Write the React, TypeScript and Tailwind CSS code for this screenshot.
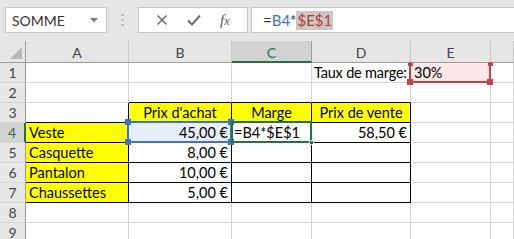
import React from 'react';

const font = { fontFamily: 'Lato, "Liberation Sans", Arial, sans-serif' };

type Cell = {
  text?: React.ReactNode;
  cls: string;
};

// column widths: row header, A, B, C, D, E, F
const cols = 'grid-cols-[26px_103px_103px_80px_99px_80px_1fr]';

const g = 'border-r border-b border-r-[#d4d4d4] border-b-[#d4d4d4]';

const RowHead: React.FC<{ n: number; active?: boolean }> = ({ n, active }) => (
  <div
    className={`h-[20px] flex items-center justify-center text-[14px] border-b border-b-[#d4d4d4] ${
      active
        ? 'bg-[#d2d2d2] text-[#217346] border-r-2 border-r-[#217346]'
        : 'bg-[#e6e6e6] text-[#444] border-r border-r-[#9b9b9b]'
    }`}
  >
    {n}
  </div>
);

const rows: Cell[][] = [
  // row 1
  [
    { cls: g },
    { cls: g },
    { cls: g },
    { text: 'Taux de marge:', cls: `${g} pl-[2px] justify-start tracking-[-0.2px]` },
    { text: '30%', cls: `${g} bg-[#fbe8e9] pl-[3px] justify-start` },
    { cls: g },
  ],
  // row 2
  [
    { cls: g },
    { cls: 'border-r border-r-[#d4d4d4] border-b border-b-black' },
    { cls: 'border-r border-r-[#d4d4d4] border-b border-b-black' },
    { cls: 'border-r border-r-[#d4d4d4] border-b border-b-black' },
    { cls: g },
    { cls: g },
  ],
  // row 3
  [
    { cls: 'border-r border-r-black border-b border-b-black' },
    { text: "Prix d'achat", cls: 'border-r border-b border-black bg-[#ffff00] justify-center' },
    { text: 'Marge', cls: 'border-r border-b border-black bg-[#ffff00] justify-center' },
    { text: 'Prix de vente', cls: 'border-r border-b border-black bg-[#ffff00] justify-center' },
    { cls: g },
    { cls: g },
  ],
  // row 4
  [
    { text: 'Veste', cls: 'border-r border-b border-black bg-[#ffff00] pl-[3px]' },
    { text: '45,00 €', cls: 'border-r border-b border-black bg-[#e8eef8] justify-end pr-[3px]' },
    { text: '=B4*$E$1', cls: 'border-r border-b border-black pl-[2px]' },
    { text: '58,50 €', cls: 'border-r border-b border-black justify-end pr-[3px]' },
    { cls: g },
    { cls: g },
  ],
  // row 5
  [
    { text: 'Casquette', cls: 'border-r border-b border-black bg-[#ffff00] pl-[3px]' },
    { text: '8,00 €', cls: 'border-r border-b border-black justify-end pr-[3px]' },
    { cls: 'border-r border-b border-black' },
    { cls: 'border-r border-b border-black' },
    { cls: g },
    { cls: g },
  ],
  // row 6
  [
    { text: 'Pantalon', cls: 'border-r border-b border-black bg-[#ffff00] pl-[3px]' },
    { text: '10,00 €', cls: 'border-r border-b border-black justify-end pr-[3px]' },
    { cls: 'border-r border-b border-black' },
    { cls: 'border-r border-b border-black' },
    { cls: g },
    { cls: g },
  ],
  // row 7
  [
    { text: 'Chaussettes', cls: 'border-r border-b border-black bg-[#ffff00] pl-[3px]' },
    { text: '5,00 €', cls: 'border-r border-b border-black justify-end pr-[3px]' },
    { cls: 'border-r border-b border-black' },
    { cls: 'border-r border-b border-black' },
    { cls: g },
    { cls: g },
  ],
  // row 8
  [{ cls: g }, { cls: g }, { cls: g }, { cls: g }, { cls: g }, { cls: g }],
  // row 9
  [{ cls: g }, { cls: g }, { cls: g }, { cls: g }, { cls: g }, { cls: g }],
];

const letters = ['A', 'B', 'C', 'D', 'E', ''];

export default function App() {
  return (
    <div className="w-[514px] h-[239px] overflow-hidden bg-[#e6e6e6] select-none" style={font}>
      {/* Formula bar */}
      <div className="h-[41px] flex items-start pt-[7px] pl-[5px] gap-0">
        <div className="w-[102px] h-[26px] bg-white border border-[#c6c6c6] flex items-center justify-between pl-[6px] pr-[8px]">
          <span className="text-[14px] text-[#333]">SOMME</span>
          <svg width="8" height="5" viewBox="0 0 8 5">
            <path d="M0 0 H8 L4 4.5 Z" fill="#7a7a7a" />
          </svg>
        </div>
        <div className="w-[31px] h-[26px] flex items-center justify-center">
          <svg width="3" height="12" viewBox="0 0 3 12">
            <rect x="0.5" y="0" width="2" height="2" fill="#b0b0b0" />
            <rect x="0.5" y="5" width="2" height="2" fill="#b0b0b0" />
            <rect x="0.5" y="10" width="2" height="2" fill="#b0b0b0" />
          </svg>
        </div>
        <div className="w-[110px] h-[26px] bg-white border border-[#c6c6c6] flex items-center justify-around px-[8px]">
          <svg width="12" height="12" viewBox="0 0 12 12">
            <path d="M1.5 1.5 L10.5 10.5 M10.5 1.5 L1.5 10.5" stroke="#6e6e6e" strokeWidth="1.6" />
          </svg>
          <svg width="14" height="12" viewBox="0 0 14 12">
            <path d="M1 6.5 L5 10.5 L13 1.5" stroke="#6e6e6e" strokeWidth="1.9" fill="none" />
          </svg>
          <span className="text-[15px] italic text-[#555] leading-none" style={{ fontFamily: '"Liberation Serif", serif' }}>
            f<span className="text-[12px]">x</span>
          </span>
        </div>
        <div className="ml-[3px] flex-1 h-[26px] bg-white border border-[#c6c6c6] border-r-0 flex items-center pl-[11px] text-[15px]">
          <span className="text-[#333]">=</span>
          <span className="text-[#3f73c9]">B4</span>
          <span className="text-[#333]">*</span>
          <span className="text-[#c0392b] bg-[#c8c8c8] leading-[19px] px-[1px]">$E$1</span>
        </div>
      </div>

      {/* Sheet */}
      <div className="relative bg-white text-[14.5px] text-black">
        <div className={`grid ${cols}`}>
          {/* header row */}
          <div className="h-[22px] bg-[#e6e6e6] border-r border-b border-[#9b9b9b] relative">
            <svg className="absolute right-[3px] bottom-[3px]" width="12" height="12" viewBox="0 0 12 12">
              <path d="M12 0 V12 H0 Z" fill="#b8b8b8" />
            </svg>
          </div>
          {letters.map((l, i) =>
            l === 'C' ? (
              <div
                key={i}
                className="h-[22px] bg-[#d2d2d2] text-[#217346] border-r border-r-[#9b9b9b] border-b-2 border-b-[#217346] flex items-center justify-center text-[14px] pt-[2px]"
              >
                {l}
              </div>
            ) : (
              <div
                key={i}
                className="h-[22px] bg-[#e6e6e6] text-[#444] border-r border-r-[#c6c6c6] border-b border-b-[#9b9b9b] flex items-center justify-center text-[14px] pt-[2px]"
              >
                {l}
              </div>
            )
          )}

          {rows.map((r, ri) => (
            <React.Fragment key={ri}>
              <RowHead n={ri + 1} active={ri === 3} />
              {r.map((c, ci) => (
                <div key={ci} className={`h-[20px] flex items-center whitespace-nowrap overflow-visible ${c.cls}`}>
                  {c.text}
                </div>
              ))}
            </React.Fragment>
          ))}
        </div>

        {/* B4 blue reference range */}
        <div className="absolute left-[127px] top-[80px] w-[105px] h-[22px] border-2 border-[#3f73c9] pointer-events-none" />
        <div className="absolute left-[125px] top-[78px] w-[6px] h-[6px] bg-[#3f73c9]" />
        <div className="absolute left-[228px] top-[78px] w-[6px] h-[6px] bg-[#3f73c9]" />
        <div className="absolute left-[125px] top-[98px] w-[6px] h-[6px] bg-[#3f73c9]" />
        <div className="absolute left-[228px] top-[98px] w-[6px] h-[6px] bg-[#3f73c9]" />

        {/* C4 active cell */}
        <div className="absolute left-[231px] top-[80px] w-[81px] h-[22px] border-2 border-[#217346] pointer-events-none" />
        <div className="absolute left-[309px] top-[99px] w-[5px] h-[5px] bg-[#217346] border border-white" />

        {/* E1 red reference range */}
        <div className="absolute left-[409px] top-[21px] w-[82px] h-[21px] border-2 border-[#c4404a] border-t-0 pointer-events-none" />
        <div className="absolute left-[408px] top-[22px] w-[5px] h-[3px] bg-[#c4404a]" />
        <div className="absolute left-[488px] top-[22px] w-[5px] h-[3px] bg-[#c4404a]" />
        <div className="absolute left-[407px] top-[38px] w-[6px] h-[6px] bg-[#c4404a]" />
        <div className="absolute left-[487px] top-[38px] w-[6px] h-[6px] bg-[#c4404a]" />
      </div>
    </div>
  );
}
